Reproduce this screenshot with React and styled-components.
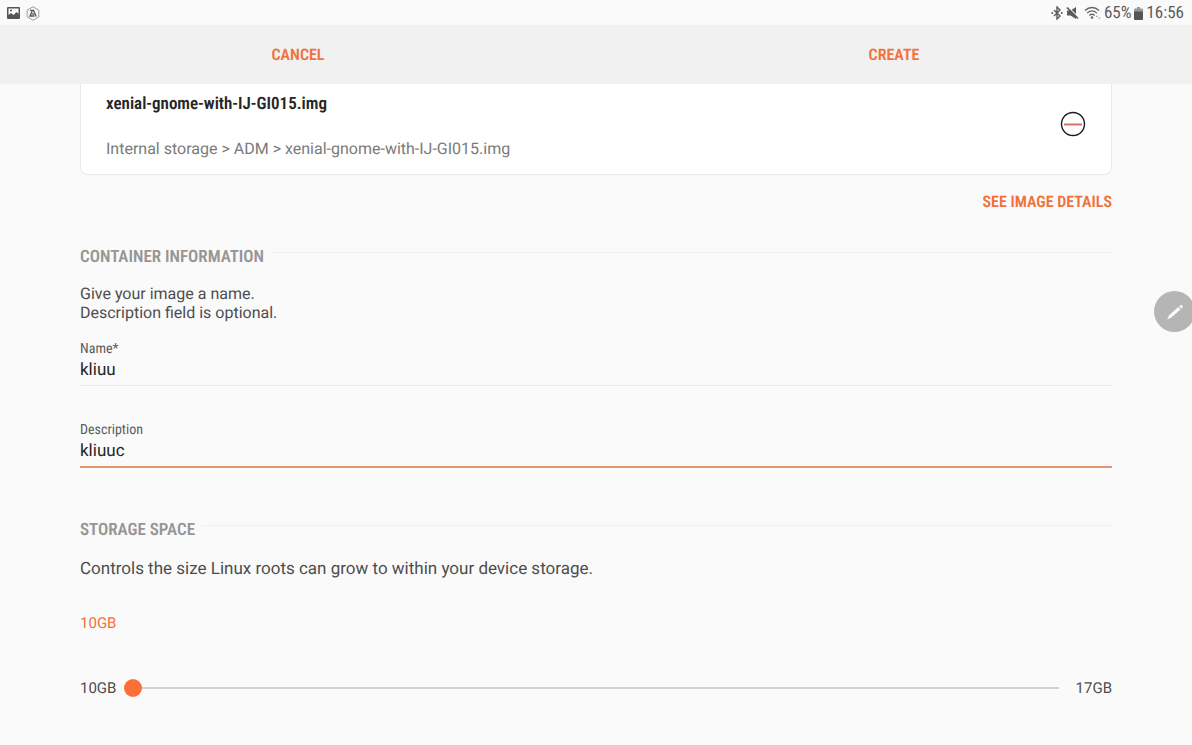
import React, { useState } from "react"
import styled, { createGlobalStyle } from "styled-components"

const GlobalStyle = createGlobalStyle`
  * {
    box-sizing: border-box;
  }
  body {
    margin: 0;
    background: #fafafa;
    color: #4d4d4d;
    font-family: Roboto, "Liberation Sans", sans-serif;
    font-size: 16px;
    line-height: 20px;
    overflow-x: hidden;
    text-rendering: geometricPrecision;
  }
  button,
  input {
    font-family: inherit;
    text-rendering: inherit;
  }
`

const condensed = `"Roboto Condensed", Roboto, "Liberation Sans", sans-serif`

const StatusBar = styled.div`
  display: flex;
  justify-content: space-between;
  align-items: center;
  height: 25px;
  padding: 1px 8px 0 7px;
  color: #5c5c5c;
  font-family: ${condensed};
  font-size: 17px;
`

StatusBar.Group = styled.div`
  display: flex;
  align-items: center;
  gap: ${(props) => props.$gap};
  svg {
    display: block;
  }
`

const ActionBar = styled.header`
  display: grid;
  grid-template-columns: 1fr 1fr;
  height: 59px;
  padding-top: 1px;
  background: #f1f1f1;
`

const TextButton = styled.button`
  padding: 0;
  border: none;
  background: none;
  color: #f0713c;
  font-family: ${condensed};
  font-size: 16px;
  font-weight: 600;
  line-height: 20px;
  text-transform: uppercase;
  cursor: pointer;
`

const Content = styled.main`
  display: flex;
  flex-direction: column;
  padding: 0 80px 40px;
`

const ImageCard = styled.section`
  display: flex;
  align-items: flex-start;
  justify-content: space-between;
  padding: 10px 25px 15px;
  border: 1px solid #e9e9e9;
  border-top: none;
  border-radius: 0 0 8px 8px;
  background: #fff;
`

ImageCard.Title = styled.h3`
  margin: 0 0 25px;
  color: #262626;
  font-family: ${condensed};
  font-size: 17px;
  font-weight: 600;
  line-height: 20px;
`

ImageCard.Path = styled.p`
  margin: 0;
  color: #7a7a7a;
`

const RemoveButton = styled.button`
  width: 26px;
  height: 26px;
  margin-top: 17px;
  padding: 0;
  border: none;
  background: none;
  cursor: pointer;
  svg {
    display: block;
  }
`

const DetailsRow = styled.div`
  display: flex;
  justify-content: flex-end;
  margin: 17px 0 35px;
`

const SectionTitle = styled.h2`
  display: flex;
  gap: 7px;
  margin: 0;
  color: #969696;
  font-family: ${condensed};
  font-size: 17px;
  font-weight: 600;
  line-height: 20px;
  text-transform: uppercase;
  &::after {
    content: "";
    flex: 1;
    height: 1px;
    margin-top: 5px;
    background: #f0f0f0;
  }
`

const Intro = styled.p`
  margin: 17px 0 19px;
  line-height: 19px;
`

const Hint = styled.p`
  margin: 19px 0 34px;
  font-size: 17px;
`

const Field = styled.div`
  display: flex;
  flex-direction: column;
  margin-bottom: ${(props) => props.$gap};
  label {
    margin-bottom: 2px;
    color: #5c5c5c;
    font-family: ${condensed};
    font-size: 14px;
    line-height: 16px;
  }
  input {
    width: 100%;
    height: ${(props) => (props.$active ? "28px" : "27px")};
    padding: 0 0 5px;
    border: none;
    border-bottom: ${(props) =>
      props.$active ? "2px solid #e8956f" : "1px solid #ebebeb"};
    background: none;
    color: #262626;
    font-size: 17px;
    outline: none;
  }
`

const CurrentSize = styled.output`
  margin-bottom: 45px;
  color: #f0713c;
  font-size: 15px;
`

const SliderRow = styled.div`
  display: flex;
  align-items: center;
  font-size: 15px;
`

const Slider = styled.input`
  flex: 1;
  min-width: 0;
  height: 18px;
  margin: 0 17px 0 8px;
  appearance: none;
  background: none;
  cursor: pointer;
  &::-webkit-slider-runnable-track {
    height: 2px;
    background: #d2d2d2;
  }
  &::-webkit-slider-thumb {
    appearance: none;
    width: 18px;
    height: 18px;
    margin-top: -8px;
    border-radius: 50%;
    background: #fc7037;
  }
`

const FloatingButton = styled.button`
  position: fixed;
  top: 291px;
  right: -3px;
  display: flex;
  align-items: center;
  justify-content: center;
  width: 41px;
  height: 41px;
  padding: 0;
  border: none;
  border-radius: 50%;
  background: #b5b5b5;
  cursor: pointer;
`

const PictureIcon = () => (
  <svg width="13" height="12" viewBox="0 0 13 12" aria-hidden="true">
    <path
      fillRule="evenodd"
      fill="#555"
      d="M1 0h11a1 1 0 0 1 1 1v10a1 1 0 0 1-1 1H1a1 1 0 0 1-1-1V1a1 1 0 0 1 1-1zM1.500 1.500v6.500l2.500-2 2.500 2 3-3 2 2V1.500z"
    />
    <circle cx="4" cy="3.600" r="1" fill="#555" />
  </svg>
)

const HexIcon = () => (
  <svg width="14" height="15" viewBox="0 0 14 15" fill="none" aria-hidden="true">
    <path d="M7 .8l5.800 3.300v6.800L7 14.200 1.200 10.900V4.100z" stroke="#999" />
    <path
      d="M4 4.300h3.500l2.700 6.200M6.200 5l-2.200 5h4.500M5.800 7.600l2.400.8"
      stroke="#555"
      strokeWidth="1.300"
    />
  </svg>
)

const BluetoothIcon = () => (
  <svg width="12" height="14" viewBox="0 0 12 14" fill="none" aria-hidden="true">
    <path
      d="M3 4l6 6-3 3V1l3 3-6 6"
      stroke="#5c5c5c"
      strokeWidth="1.400"
    />
    <circle cx="1.300" cy="7" r="1" fill="#5c5c5c" />
    <circle cx="10.700" cy="7" r="1" fill="#5c5c5c" />
  </svg>
)

const MuteIcon = () => (
  <svg width="15" height="14" viewBox="0 0 15 14" aria-hidden="true">
    <path d="M1 4.500h3.500L10 1v12L4.500 9.500H1z" fill="#5c5c5c" />
    <path d="M2 .8l11 11" stroke="#fafafa" strokeWidth="1.200" />
    <path d="M1 1.500l11 11" stroke="#5c5c5c" strokeWidth="1.700" />
  </svg>
)

const WifiIcon = () => (
  <svg width="17" height="14" viewBox="0 0 17 14" fill="none" aria-hidden="true">
    <path
      d="M1 4.500c4-4 10-4 14 0M3.200 7c3-2.700 6.600-2.700 9.600 0M5.300 9.400c1.700-1.500 3.700-1.500 5.400 0"
      stroke="#666"
      strokeWidth="1.300"
    />
    <circle cx="8" cy="11.500" r="1.300" fill="#666" />
    <path d="M11.500 11l1.300-1.800 1.300 1.800zM14 11.500h2.600l-1.300 1.800z" fill="#aaa" />
  </svg>
)

const BatteryIcon = () => (
  <svg width="9" height="13" viewBox="0 0 9 13" aria-hidden="true">
    <path d="M3 0h3v1.500h2q1 0 1 1V5H0V2.500q0-1 1-1h2z" fill="#999" />
    <path d="M0 4.500h9V12q0 1-1 1H1q-1 0-1-1z" fill="#555" />
  </svg>
)

const RemoveIcon = () => (
  <svg width="26" height="26" viewBox="0 0 26 26" fill="none" aria-hidden="true">
    <circle cx="13" cy="13" r="11.500" stroke="#1c1c1c" strokeWidth="1.400" />
    <path d="M4 13.500h18" stroke="#d9705f" strokeWidth="2" />
  </svg>
)

const PencilIcon = () => (
  <svg width="18" height="18" viewBox="0 0 18 18" fill="#fff" aria-hidden="true">
    <path d="M1.200 16.500l2-4.300L12.300 4l2.200 2.400-9.200 8.200z" />
    <path d="M13.200 3.200l1.200-1q.7-.5 1.300.1l.9 1q.5.7-.1 1.200l-1.200 1.100z" />
  </svg>
)

export default () => {
  const [name, setName] = useState("kliuu")
  const [description, setDescription] = useState("kliuuc")
  const [size, setSize] = useState(10)

  return (
    <>
      <GlobalStyle />
      <StatusBar>
        <StatusBar.Group $gap="6px">
          <PictureIcon />
          <HexIcon />
        </StatusBar.Group>
        <StatusBar.Group $gap="3px">
          <BluetoothIcon />
          <MuteIcon />
          <WifiIcon />
          <span>65%</span>
          <BatteryIcon />
          <span>16:56</span>
        </StatusBar.Group>
      </StatusBar>
      <ActionBar>
        <TextButton type="button">Cancel</TextButton>
        <TextButton type="button">Create</TextButton>
      </ActionBar>
      <Content>
        <ImageCard>
          <div>
            <ImageCard.Title>xenial-gnome-with-IJ-GI015.img</ImageCard.Title>
            <ImageCard.Path>
              Internal storage &gt; ADM &gt; xenial-gnome-with-IJ-GI015.img
            </ImageCard.Path>
          </div>
          <RemoveButton type="button" aria-label="Remove image">
            <RemoveIcon />
          </RemoveButton>
        </ImageCard>
        <DetailsRow>
          <TextButton type="button">See image details</TextButton>
        </DetailsRow>

        <SectionTitle>Container information</SectionTitle>
        <Intro>
          Give your image a name.
          <br />
          Description field is optional.
        </Intro>
        <Field $gap="36px">
          <label htmlFor="name">Name*</label>
          <input
            id="name"
            type="text"
            value={name}
            onChange={(e) => setName(e.target.value)}
          />
        </Field>
        <Field $gap="52px" $active>
          <label htmlFor="description">Description</label>
          <input
            id="description"
            type="text"
            value={description}
            onChange={(e) => setDescription(e.target.value)}
          />
        </Field>

        <SectionTitle>Storage space</SectionTitle>
        <Hint>
          Controls the size Linux roots can grow to within your device storage.
        </Hint>
        <CurrentSize htmlFor="size">{size}GB</CurrentSize>
        <SliderRow>
          <label htmlFor="size">10GB</label>
          <Slider
            id="size"
            type="range"
            min="10"
            max="17"
            value={size}
            onChange={(e) => setSize(Number(e.target.value))}
          />
          <span>17GB</span>
        </SliderRow>
      </Content>
      <FloatingButton type="button" aria-label="Edit">
        <PencilIcon />
      </FloatingButton>
    </>
  )
}
